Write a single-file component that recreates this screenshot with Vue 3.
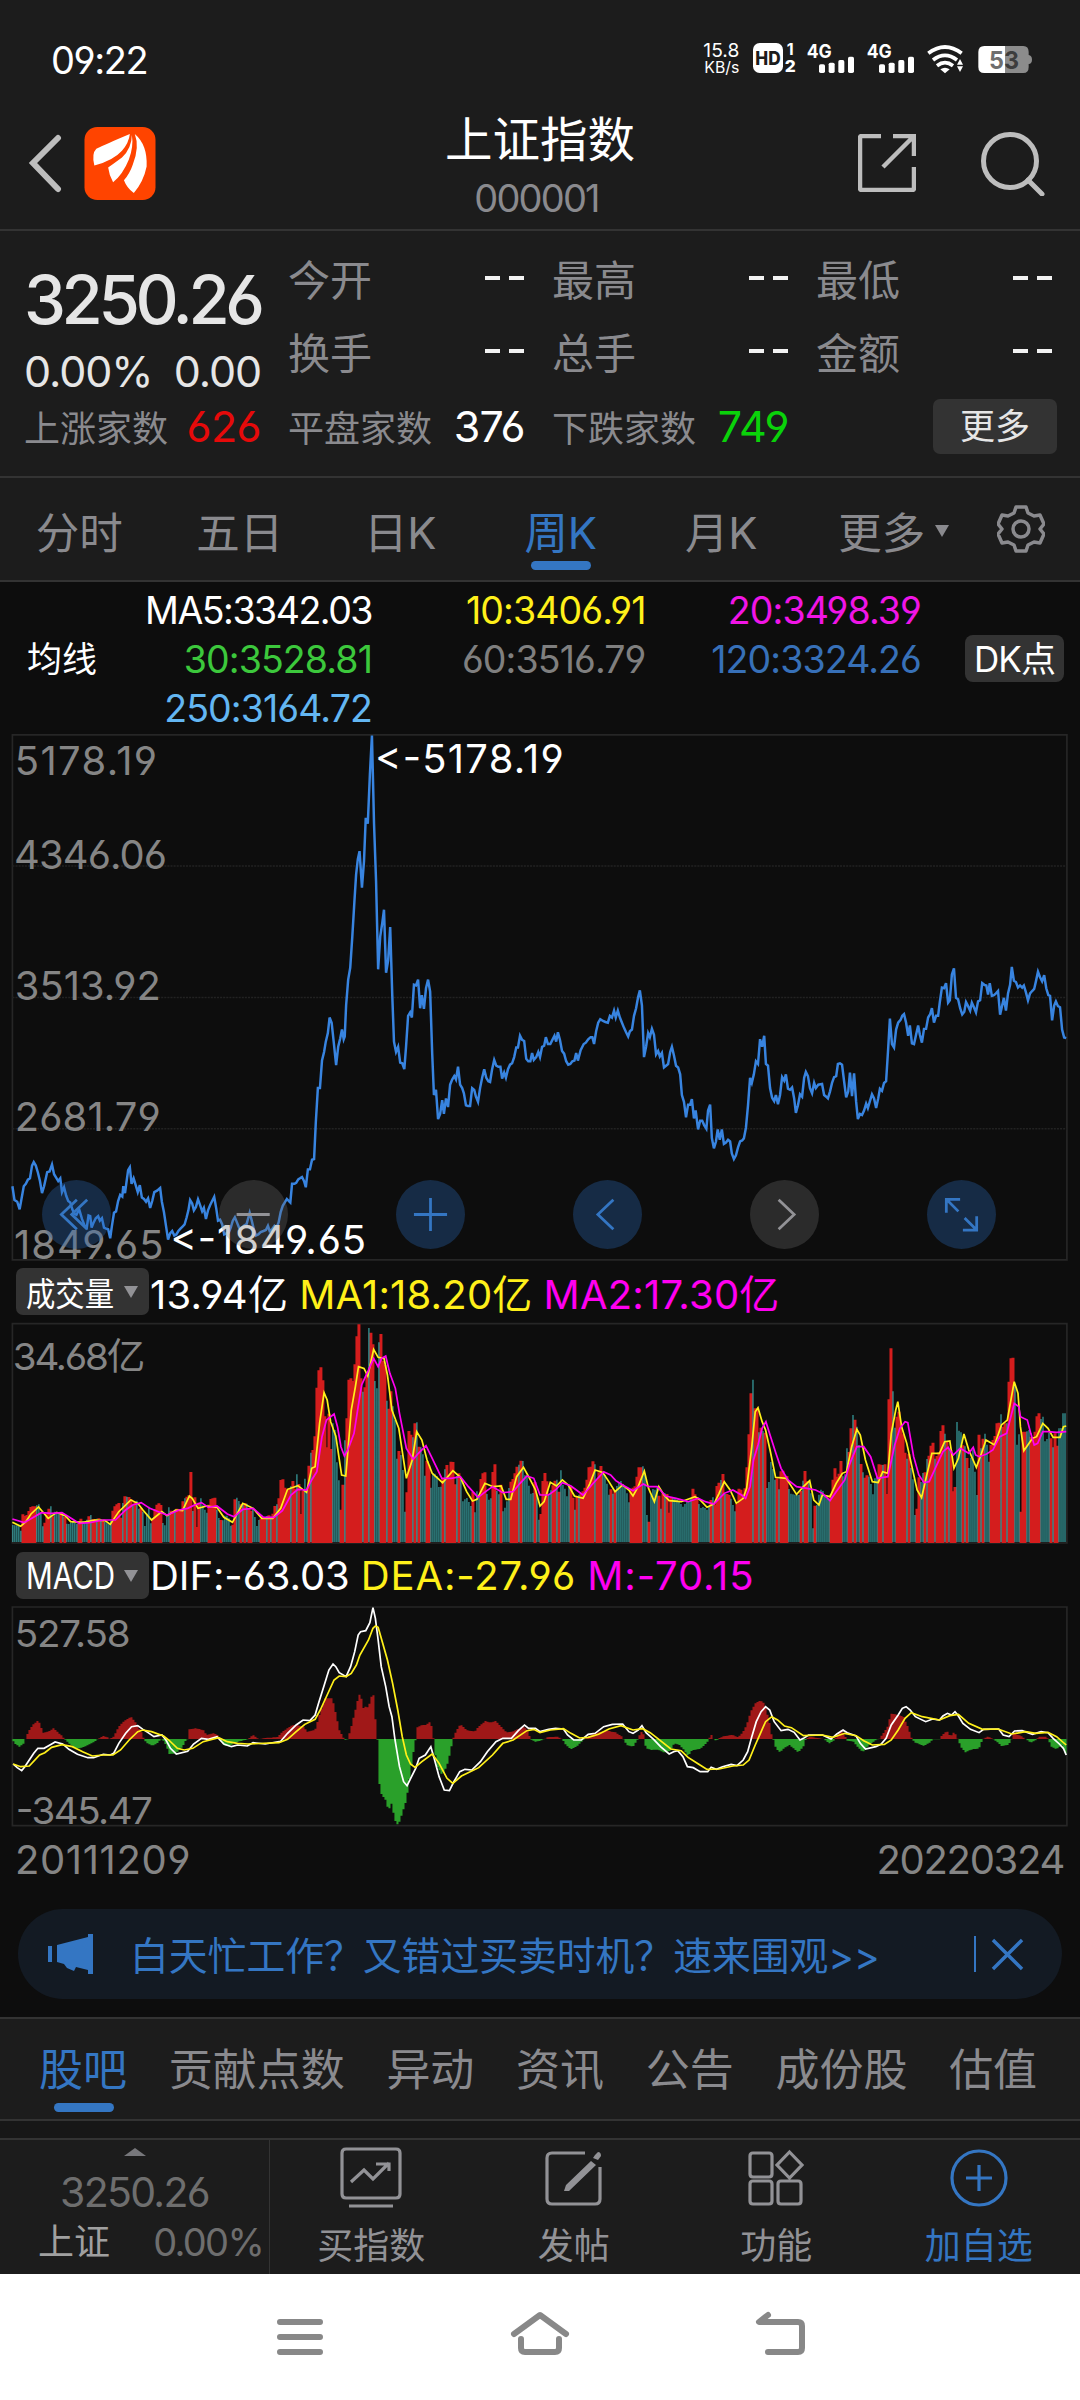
<template>
  <div class="page">
    <div class="status">
      <span class="clock">09:22</span>
      <svg class="status-icons" viewBox="0 0 1110 150">
        <g class="fill-white">
          <text x="40" y="81" font-size="57" textLength="108" lengthAdjust="spacingAndGlyphs">15.8</text>
          <text x="43" y="128" font-size="48" textLength="105" lengthAdjust="spacingAndGlyphs">KB/s</text>
          <rect x="189" y="39" width="90" height="90" rx="20" />
          <text class="dark" x="196" y="104" font-size="56" font-weight="800" textLength="76" lengthAdjust="spacingAndGlyphs">HD</text>
          <text x="290" y="74" font-size="48" font-weight="700" textLength="20">1</text>
          <text x="284" y="127" font-size="48" font-weight="800" textLength="33" lengthAdjust="spacingAndGlyphs">2</text>
          <g v-for="dx in [0, 180]" :key="dx" :transform="`translate(${dx} 0)`">
            <text x="350" y="83" font-size="58" font-weight="700" textLength="75" lengthAdjust="spacingAndGlyphs">4G</text>
            <rect x="387" y="103" width="18" height="26" rx="5" />
            <rect x="416" y="98" width="18" height="31" rx="5" />
            <rect x="445" y="90" width="18" height="39" rx="5" />
            <rect x="474" y="80" width="18" height="49" rx="5" />
          </g>
          <path d="M751 118q14-10 28 0l-14 12z" />
          <path class="wifi" d="M715 70q50-38 100 0M729 90q36-28 72 0M741 107q24-18 48 0" />
          <path class="cut" d="M810 80L794 106 810 134 826 106z" />
          <path d="M810 87l9 17h-18zM810 126l9-17h-18z" />
        </g>
        <path fill="#8c8c8c" d="M945 48h55q16 0 16 18v9q10 2 10 14t-10 13v9q0 18-16 18h-55z" />
        <path fill="#fff" d="M945 48h-62q-18 0-18 18v45q0 18 18 18h62z" />
        <text x="897" y="116" font-size="74" font-weight="700" textLength="90" lengthAdjust="spacingAndGlyphs"><tspan fill="#6e6e6e">5</tspan><tspan fill="#3d3d3d">3</tspan></text>
      </svg>
    </div>

    <header class="header">
      <div class="head-side">
        <svg class="back" viewBox="0 0 40 60"><path d="M33 5L8 30l25 26" /></svg>
        <svg class="logo" viewBox="0 0 72 74">
          <rect width="72" height="74" rx="13" fill="#ff4400" />
          <path fill="#fff" d="M46 7Q22 17 12 22 7 27 10 39 29 34 38 24 45 16 46 7zM48 8Q48 21 38 31 30 37 24 41 25 49 29 56 39 48 45 33 50 19 48 8zM51 7Q56 20 49 38 46 47 40 54 43 62 50 67 60 55 63 40 64 18 51 7z" />
        </svg>
      </div>
      <div class="head-title">
        <h1>上证指数</h1>
        <span>000001</span>
      </div>
      <div class="head-side right">
        <svg class="share" viewBox="0 0 58 58"><path d="M23 2H4Q2 2 2 4v50q0 2 2 2h50q2 0 2-2V33M35 2h21v20M56 2L25 33" /></svg>
        <svg class="search" viewBox="0 0 64 64"><circle cx="29" cy="29" r="26.5" /><path d="M47 48l14 14" /></svg>
      </div>
    </header>

    <section class="quote">
      <div class="quote-main">
        <div class="price">3250.26</div>
        <div class="change"><span>0.00%</span><span>0.00</span></div>
      </div>
      <div v-for="(col, i) in quoteCols" :key="i" class="quote-col">
        <div v-for="name in col" :key="name"><span>{{ name }}</span><b><i></i><i></i></b></div>
      </div>
      <div v-for="c in counts" :key="c.name" class="count" :class="c.cls">
        <span>{{ c.name }}</span><b>{{ c.value }}</b>
      </div>
      <div class="more"><button>更多</button></div>
    </section>

    <nav class="period">
      <span v-for="p in periods" :key="p" :class="{ active: p === '周K' }">
        {{ p }}<em v-if="p === '更多'"></em>
      </span>
      <svg class="gear" viewBox="0 0 48 48">
        <path d="M19 2h10l2 6 6 3 6-1 4 9-4 5 4 5-4 9-6-1-6 3-2 6H19l-2-6-6-3-6 1-4-9 4-5-4-5 4-9 6 1 6-3z" />
        <circle cx="24" cy="24" r="8" />
      </svg>
    </nav>

    <section class="averages">
      <span class="avg-name">均线</span>
      <div class="avg-list">
        <span v-for="m in averages" :key="m.text" :style="{ color: m.color }">{{ m.text }}</span>
      </div>
      <button>DK点</button>
    </section>

    <section class="stage">
      <svg class="plot price-plot" viewBox="0 0 3136 1545" preserveAspectRatio="none">
        <path class="frame" d="M36 14H3098V1539H36z" />
        <path class="grid-line" d="M36 395H3098M36 777H3098M36 1158H3098" />
        <g class="axis" font-size="116">
          <text x="43" y="130" textLength="413">5178.19</text>
          <text x="41" y="403" textLength="444">4346.06</text>
          <text x="43" y="783" textLength="424">3513.92</text>
          <text x="43" y="1166" textLength="424">2681.79</text>
          <text x="41" y="1535" textLength="434">1849.65</text>
        </g>
        <polyline class="line blue" :points="priceLine" />
        <g class="mark" font-size="116">
          <text x="1089" y="124" textLength="548">&lt;-5178.19</text>
          <text x="495" y="1521" textLength="568">&lt;-1849.65</text>
        </g>
      </svg>
      <div class="tools">
        <button v-for="t in tools" :key="t.d" :class="{ off: t.off }">
          <svg viewBox="0 0 200 200"><path :d="t.d" /></svg>
        </button>
      </div>
    </section>

    <div class="indicator vol-head">
      <button><span class="vol-name">成交量</span><em></em></button>
      <b>13.94亿</b><b class="yellow">MA1:18.20亿</b><b class="pink">MA2:17.30亿</b>
    </div>
    <svg class="plot sub-plot" viewBox="0 186 3136 672" preserveAspectRatio="none">
      <path class="frame" d="M36 191H3098V849H36z" />
      <path :d="volume.red" fill="#d41d1d" />
      <path :d="volume.cyan" fill="#4adfe0" fill-opacity=".85" />
      <text class="axis" x="37" y="330" font-size="112" textLength="385">34.68亿</text>
      <polyline class="line thin yellow" :points="volMa1" />
      <polyline class="line thin pink" :points="volMa2" />
    </svg>

    <div class="indicator macd-head">
      <button><span class="macd-name">MACD</span><em></em></button>
      <b class="dif">DIF:-63.03</b><b class="yellow">DEA:-27.96</b><b class="pink">M:-70.15</b>
    </div>
    <svg class="plot sub-plot" viewBox="0 195 3136 672" preserveAspectRatio="none">
      <path class="frame" d="M36 201H3098V857H36z" />
      <path :d="histogram.up" fill="#a01818" />
      <path :d="histogram.down" fill="#2aa02a" />
      <g class="axis" font-size="112">
        <text x="43" y="322" textLength="336">527.58</text>
        <text x="46" y="851" textLength="398">-345.47</text>
      </g>
      <polyline class="line thin white" :points="dif" />
      <polyline class="line thin yellow" :points="dea" />
    </svg>
    <div class="dates"><span>20111209</span><span>20220324</span></div>

    <div class="banner-wrap">
      <div class="banner">
        <svg class="horn" viewBox="0 0 45 40"><path d="M0 12h4v16H0zM9 11L40 3V0h5v40h-5v-4l-12-3-2 4-7-3-3-4-7-2z" /></svg>
        <span>白天忙工作？又错过买卖时机？速来围观&gt;&gt;</span>
        <i></i>
        <svg class="close" viewBox="0 0 34 34"><path d="M2 2l30 30M32 2L2 32" /></svg>
      </div>
    </div>

    <nav class="sections">
      <span v-for="s in sections" :key="s" :class="{ active: s === '股吧' }">{{ s }}</span>
    </nav>
    <div class="strip"></div>

    <footer class="bottom">
      <div class="index">
        <em></em>
        <strong>3250.26</strong>
        <div><span>上证</span><b>0.00%</b></div>
      </div>
      <div v-for="a in actions" :key="a.name" class="action" :class="{ active: a.active }">
        <svg viewBox="0 0 62 62"><path :d="a.d" /><path v-if="a.solid" class="solid" :d="a.solid" /></svg>
        <span>{{ a.name }}</span>
      </div>
    </footer>

    <div class="system">
      <svg viewBox="0 0 60 50"><path d="M10 12h40M10 27h40M10 42h40" /></svg>
      <svg viewBox="0 0 60 50"><path d="M4 24L30 5l26 19M11 29v9q0 4 4 4h30q4 0 4-4v-9" /></svg>
      <svg viewBox="0 0 60 50"><path d="M18 5l-9 7h39q4 0 4 4v22q0 4-4 4H18" /></svg>
    </div>
  </div>
</template>

<script setup>
const quoteCols = [["今开", "换手"], ["最高", "总手"], ["最低", "金额"]];
const counts = [
  { name: "上涨家数", value: 626, cls: "rise" },
  { name: "平盘家数", value: 376, cls: "" },
  { name: "下跌家数", value: 749, cls: "fall" },
];
const periods = ["分时", "五日", "日K", "周K", "月K", "更多"];
const averages = [
  { text: "MA5:3342.03", color: "#ffffff" },
  { text: "10:3406.91", color: "#fff01a" },
  { text: "20:3498.39", color: "#f015e6" },
  { text: "30:3528.81", color: "#3cc83c" },
  { text: "60:3516.79", color: "#7f7f7f" },
  { text: "120:3324.26", color: "#3770b8" },
  { text: "250:3164.72", color: "#63b6f2" },
];
const sections = ["股吧", "贡献点数", "异动", "资讯", "公告", "成份股", "估值"];
const tools = [
  { d: "M101 57L56 100l45 43M131 57L86 100l45 43" },
  { d: "M51 100h96", off: true },
  { d: "M52 100h96M100 52v96" },
  { d: "M117 57L72 100l45 43" },
  { d: "M83 57l45 43-45 43", off: true },
  { d: "M96 56H56v39M56 56l35 35M104 145h40v-40M144 145l-35-35" },
];
const actions = [
  {
    name: "买指数",
    d: "M6 2h50q4 0 4 4v41q0 4-4 4H6q-4 0-4-4V6q0-4 4-4zM9 59h44M11 35l13-12 9 9 16-16M36 17h13v7",
  },
  {
    name: "发帖",
    d: "M42 6H9Q4 6 4 11v41q0 5 5 5h43q5 0 5-5V20",
    solid: "M48 14l5 4-27 26-5 0 2-6zM52 8l3-3q3 0 3 4l-3 4-5-2z",
  },
  {
    name: "功能",
    d: "M8 6h16q3 0 3 3v18q0 3-3 3H8q-3 0-3-3V9q0-3 3-3zM8 34h16q3 0 3 3v17q0 3-3 3H8q-3 0-3-3V37q0-3 3-3zM36 34h17q3 0 3 3v17q0 3-3 3H36q-3 0-3-3V37q0-3 3-3zM44.500 5L57 18 44.500 31 32 18z",
  },
  {
    name: "加自选",
    d: "M31 4a27 27 0 1 1 0 54a27 27 0 1 1 0-54zM31 18v26M18 31h26",
    active: true,
  },
];

// 图表数据分左右两屏存放，每屏宽 1568
const HALF = 1568;
const parse = (s) => s.trim().split(/\s+/).map((p) => p.split(",").map(Number));
const join = (left, right) => [...parse(left), ...parse(right).map(([x, y]) => [x + HALF, y])];
const toPoints = (list) => list.map((p) => p.join(",")).join(" ");

const priceLine = toPoints(join(
  `36,1325 42,1365 50,1370 57,1392 69,1325 75,1318 81,1306 87,1302 93,1265 98,1255 104,1265 110,1285 116,1310 122,1345 128,1325 137,1284 144,1282 151,1262 157,1290 163,1300 169,1310 175,1302 180,1342 186,1328 192,1352 198,1368 204,1372 210,1392 216,1405 222,1408 230,1392 238,1420 246,1440 252,1445 257,1410 262,1412 266,1445 272,1430 278,1418 285,1412 290,1425 296,1418 302,1445 308,1448 314,1450 320,1476 325,1440 331,1402 337,1398 343,1368 349,1350 355,1355 358,1325 363,1345 367,1315 372,1278 377,1270 382,1318 388,1302 394,1322 400,1342 406,1322 412,1358 418,1362 424,1370 430,1360 436,1388 442,1368 448,1342 456,1338 465,1330 470,1370 476,1400 482,1440 488,1480 494,1462 500,1455 506,1468 512,1465 518,1455 524,1448 530,1442 536,1436 542,1415 547,1395 552,1365 558,1375 563,1395 569,1385 575,1363 581,1380 587,1398 592,1388 598,1420 604,1395 610,1380 616,1368 622,1356 628,1390 633,1425 639,1422 645,1435 651,1465 657,1462 664,1460 670,1445 676,1425 682,1415 688,1430 694,1445 700,1448 708,1440 716,1435 725,1402 731,1425 737,1450 743,1468 750,1465 757,1458 765,1455 772,1452 778,1440 783,1455 790,1450 797,1440 803,1445 809,1430 815,1400 821,1382 827,1372 833,1362 839,1368 843,1372 848,1318 855,1318 860,1315 866,1305 871,1302 877,1298 883,1310 888,1328 894,1276 900,1276 906,1248 912,1246 917,1140 923,1040 929,1040 935,960 941,935 946,905 952,880 957,835 963,850 970,915 976,973 982,920 988,895 993,870 998,898 1001,890 1005,800 1011,725 1017,690 1023,600 1029,500 1034,420 1039,375 1044,352 1051,458 1057,380 1062,255 1068,272 1074,130 1080,16 1086,270 1092,440 1098,695 1104,600 1110,560 1115,522 1121,705 1127,670 1133,572 1139,770 1144,905 1150,935 1156,920 1162,966 1168,968 1174,985 1179,920 1185,830 1191,820 1196,835 1202,740 1208,742 1214,725 1220,808 1225,770 1231,810 1237,750 1243,725 1249,760 1255,940 1260,1060 1266,1045 1272,1130 1278,1115 1284,1075 1289,1115 1295,1070 1301,1095 1307,1030 1313,1015 1319,1005 1324,1015 1330,978 1336,1030 1342,1040 1347,1055 1353,1090 1359,1092 1365,1092 1371,1040 1377,1045 1382,1065 1388,1080 1394,1040 1400,1010 1406,985 1412,1010 1418,1020 1423,1022 1429,985 1435,958 1441,975 1447,978 1453,978 1458,1012 1464,995 1469,1010 1475,985 1481,972 1487,968 1493,950 1499,922 1504,922 1510,888 1516,900 1522,903 1528,955 1534,962 1540,962 1545,938 1550,958 1557,950 1563,935`,
  `0,950 6,920 12,917 17,892 23,912 30,912 36,900 42,888 47,905 52,878 58,900 64,932 70,940 76,962 82,972 88,970 94,962 100,960 105,938 110,960 118,930 127,912 133,908 140,898 147,892 152,892 157,912 163,875 169,850 175,840 183,845 190,848 197,850 203,830 209,835 215,815 220,835 226,815 232,835 238,850 244,865 250,878 256,890 261,875 267,870 273,830 279,808 285,775 290,756 296,800 302,950 308,920 314,880 319,892 325,868 331,885 337,942 343,932 348,948 354,938 360,980 366,975 372,970 378,935 383,920 389,945 395,975 401,980 407,1000 412,1060 418,1080 424,1125 430,1088 436,1088 441,1072 447,1128 452,1105 459,1160 465,1135 471,1135 477,1148 483,1158 488,1105 494,1088 499,1185 505,1215 511,1195 516,1160 522,1190 528,1160 534,1202 540,1198 546,1190 552,1195 557,1230 563,1246 569,1235 575,1212 581,1195 587,1192 592,1186 598,1155 604,1090 610,1010 615,1025 621,1000 627,962 633,970 639,898 645,920 651,888 656,970 662,975 668,1040 674,1068 680,1078 685,1060 691,1087 697,1060 703,1008 709,1018 714,1000 720,1042 726,1045 732,1038 738,1070 743,1112 749,1090 755,1058 761,1065 767,1010 772,993 778,1005 784,1040 790,1055 796,1025 801,1040 808,1030 819,1028 825,1060 831,1065 836,1070 842,1050 848,1025 854,1008 860,1005 865,970 871,968 877,972 883,1020 889,1067 895,1050 900,995 906,1063 912,997 918,1080 923,1130 929,1115 935,1118 941,1105 947,1085 952,1098 958,1078 964,1058 970,1070 976,1098 982,1070 987,1042 993,1048 999,1025 1005,1020 1011,925 1016,838 1022,912 1028,922 1034,870 1040,850 1047,842 1052,830 1057,825 1063,850 1069,888 1074,858 1080,910 1086,912 1092,885 1098,858 1103,885 1109,908 1115,868 1121,868 1127,835 1133,825 1138,808 1144,850 1150,830 1156,830 1161,790 1167,748 1173,750 1179,735 1185,792 1190,785 1196,710 1202,692 1208,778 1214,782 1220,808 1226,826 1232,818 1237,790 1243,802 1249,815 1254,792 1260,805 1266,820 1272,788 1278,785 1284,735 1290,740 1296,742 1301,768 1306,735 1312,772 1318,770 1324,765 1330,758 1336,827 1342,800 1347,778 1353,815 1359,765 1365,740 1370,688 1376,728 1382,732 1388,748 1394,742 1400,748 1405,742 1411,762 1417,785 1423,765 1429,758 1435,752 1440,730 1446,702 1452,718 1458,730 1464,712 1470,750 1476,770 1481,772 1487,843 1493,800 1498,788 1504,802 1510,805 1516,870 1522,893 1528,895`
));

const volTops = join(
  `36,795 55,797 60,815 64,762 75,770 90,740 105,738 112,730 120,770 126,812 132,775 140,750 147,733 150,780 157,755 175,757 187,768 195,795 210,785 222,792 235,775 245,790 262,762 270,778 290,775 310,790 320,795 325,758 335,735 347,728 352,790 358,708 370,710 378,712 385,735 396,717 405,755 412,735 420,800 425,765 432,740 440,810 446,755 458,727 467,735 475,812 490,742 500,760 510,745 525,750 530,725 540,710 548,710 550,636 557,636 560,765 566,708 570,825 575,735 582,712 590,740 600,760 610,718 625,713 632,770 645,785 655,762 668,780 674,828 680,720 687,712 700,735 715,727 725,755 735,745 745,800 752,778 770,770 783,765 790,775 795,740 808,730 815,660 823,658 828,690 842,685 850,663 857,690 861,640 867,662 873,767 877,715 884,645 890,715 893,615 898,618 902,580 906,562 911,580 916,495 921,348 928,322 934,322 940,395 948,590 953,425 960,575 965,490 971,490 977,600 983,648 989,755 995,683 1000,540 1005,545 1010,365 1016,352 1026,365 1034,265 1038,192 1044,192 1048,373 1052,400 1056,385 1064,378 1069,192 1074,225 1080,208 1087,338 1092,438 1099,258 1104,192 1110,300 1120,320 1126,518 1132,370 1140,440 1145,435 1150,605 1158,573 1163,580 1169,617 1175,755 1180,752 1185,520 1191,498 1196,570 1200,512 1209,468 1215,560 1221,560 1227,575 1233,652 1238,600 1245,615 1250,690 1256,640 1262,640 1270,650 1276,695 1285,660 1290,637 1296,603 1302,655 1308,605 1316,606 1320,675 1330,633 1338,660 1343,725 1355,713 1367,738 1372,685 1378,765 1384,693 1390,712 1395,660 1402,640 1408,637 1415,720 1425,717 1430,640 1437,612 1443,700 1448,705 1455,670 1460,755 1470,735 1478,680 1485,660 1492,655 1498,622 1506,615 1517,592 1522,645 1530,650 1537,685 1545,715 1552,660 1560,715`,
  `0,828 5,685 12,636 18,645 24,710 30,695 40,668 48,652 54,705 59,618 65,672 71,680 77,715 83,672 92,683 100,757 106,710 118,700 128,690 135,665 141,622 148,620 154,602 160,615 166,668 175,610 181,640 187,640 193,665 200,705 208,680 212,705 222,680 233,660 245,680 252,700 258,728 264,685 275,680 280,655 287,622 296,622 303,615 310,765 317,788 323,685 335,690 342,678 350,755 355,700 368,700 375,767 380,710 400,720 415,740 428,720 437,730 441,675 447,700 455,710 465,745 475,740 484,750 492,735 500,705 508,735 512,680 518,670 525,660 530,633 537,705 545,700 552,710 560,735 569,765 575,685 585,690 592,710 598,655 604,578 611,413 617,343 623,445 630,445 636,525 642,500 648,515 655,520 660,747 668,600 675,620 681,660 688,655 692,705 698,635 705,632 712,650 718,648 724,700 735,703 745,705 755,705 762,670 768,627 774,665 780,660 786,690 791,822 797,737 805,735 812,688 820,690 830,715 842,720 848,678 855,620 862,650 867,650 872,587 878,650 885,645 890,557 895,600 900,530 907,462 914,478 920,500 926,557 930,605 938,640 944,655 952,640 960,668 966,707 972,655 978,650 984,612 995,615 1003,612 1007,705 1012,545 1014,265 1020,265 1024,383 1030,505 1036,470 1042,455 1048,495 1055,530 1060,585 1066,598 1073,575 1078,640 1083,660 1088,760 1092,805 1098,645 1105,670 1112,637 1118,637 1123,597 1130,585 1136,550 1143,547 1147,603 1155,580 1160,575 1166,480 1174,515 1180,540 1188,570 1194,570 1199,700 1204,707 1209,478 1215,513 1221,510 1228,557 1235,560 1244,630 1250,600 1256,560 1262,625 1268,720 1274,522 1280,565 1286,535 1292,520 1300,570 1304,612 1310,545 1320,535 1325,490 1332,490 1338,462 1344,500 1350,490 1356,490 1360,423 1363,297 1373,293 1378,343 1384,560 1390,505 1396,765 1402,515 1412,515 1420,510 1428,540 1437,515 1444,458 1450,460 1454,478 1460,468 1466,545 1472,537 1480,510 1488,570 1495,520 1502,565 1507,500 1513,505 1518,460 1524,460 1529,582`
);

// 收跌的区间 [起, 止]
const fallRanges = join(
  `36,60 108,124 145,147 157,170 180,182 192,222 238,250 262,265 278,280 290,292 302,322 354,356 366,368 382,384 395,405 412,430 436,438 470,492 506,508 535,537 558,560 580,600 627,635 645,672 685,695 703,706 714,716 732,752 772,774 785,787 802,804 842,844 859,861 884,890 900,902 964,984 1000,1002 1051,1053 1068,1070 1086,1094 1098,1100 1120,1122 1138,1152 1160,1175 1196,1198 1208,1210 1220,1232 1250,1280 1289,1291 1324,1326 1337,1366 1376,1390 1410,1425 1440,1450 1458,1475 1504,1506 1517,1545 1560,1566`,
  `24,25 30,31 47,48 59,76 82,83 100,101 110,111 158,159 181,198 210,211 222,256 297,308 320,338 348,349 361,362 385,440 460,490 500,501 523,524 535,536 552,566 617,618 634,635 645,646 657,680 692,693 720,750 762,763 780,790 802,840 878,879 884,885 890,891 907,908 919,925 936,937 953,978 995,996 1023,1024 1029,1030 1063,1064 1075,1090 1104,1110 1122,1123 1145,1146 1174,1175 1186,1187 1209,1220 1232,1233 1244,1268 1279,1280 1290,1304 1337,1338 1354,1355 1377,1390 1412,1422 1453,1470 1476,1477 1488,1489 1504,1530`
);
// 右屏区间的终点也要平移
const falls = fallRanges.map(([a, b]) => (a >= HALF ? [a, b + HALF] : [a, b]));

const STEP = 5.808;
const COUNT = 527;

const sample = (list, x) => {
  let i = 1;
  while (i < list.length - 1 && list[i][0] < x) i++;
  const [x0, y0] = list[i - 1];
  const [x1, y1] = list[i];
  const t = Math.min(1, Math.max(0, (x - x0) / (x1 - x0)));
  return Math.round(y0 + (y1 - y0) * t);
};

const bar = (x, w, y0, y1) => `M${x.toFixed(1)} ${y0}h${w}V${y1}h${-w}z`;

const buildVolume = () => {
  const out = { red: "", cyan: "" };
  for (let i = 0; i < COUNT; i++) {
    const x = 36 + i * STEP;
    const top = Math.max(193, sample(volTops, x + 1));
    const isFall = falls.some(([a, b]) => x > a - 3 && x < b + 1.8);
    if (isFall) {
      out.cyan += bar(x, 2.904, top, 846);
    } else {
      out.red += bar(x - 2.9, 8.7, top, 849);
    }
  }
  return out;
};

const ZERO = 597;
const macdTops = join(
  `36,600 45,612 57,620 69,610 71,597 75,597 82,575 95,555 108,543 115,548 125,578 140,575 155,565 170,578 182,590 188,597 200,610 215,622 232,625 250,618 270,608 283,598 300,588 312,592 320,597 330,590 345,560 358,545 380,530 392,545 410,575 418,597 425,608 442,617 455,612 465,600 472,597 482,615 492,642 510,640 530,620 540,600 546,597 550,568 570,565 590,570 600,585 618,580 630,583 640,597 650,615 665,620 680,608 712,600 720,597 735,585 750,597 780,593 805,592 820,575 850,555 880,558 892,575 915,570 922,545 932,510 945,475 965,475 975,520 985,570 1000,598 1008,600 1012,590 1020,560 1032,510 1042,465 1048,462 1053,505 1062,500 1070,503 1078,470 1086,465 1090,530 1092,597 1097,600 1100,720 1106,760 1120,780 1128,812 1137,790 1147,840 1156,857 1168,820 1180,780 1190,710 1200,640 1207,597 1212,562 1225,555 1238,555 1246,545 1254,560 1259,597 1262,630 1270,680 1283,703 1297,680 1307,640 1315,597 1325,572 1337,553 1355,570 1378,575 1390,560 1410,543 1425,548 1440,543 1455,560 1470,577 1490,575 1505,567 1523,560 1535,580 1540,597 1555,605 1566,603`,
  `0,603 10,598 15,597 20,592 50,590 65,597 75,615 90,628 108,618 125,600 130,597 140,588 165,578 195,572 220,577 238,590 242,597 252,615 270,620 282,600 286,597 292,575 300,578 302,597 308,625 325,630 340,628 360,638 378,632 390,610 405,615 418,630 430,648 442,630 465,627 485,608 490,597 497,583 503,597 512,602 520,595 535,588 560,585 575,592 590,575 600,555 612,515 625,490 640,482 652,490 662,530 670,565 674,597 679,600 685,625 697,637 708,625 725,615 740,628 750,637 765,620 772,597 785,590 805,594 825,597 840,610 855,600 860,590 875,570 888,592 892,602 910,605 922,620 938,636 955,615 975,600 985,597 1000,575 1012,555 1018,520 1040,525 1055,530 1070,565 1080,597 1090,608 1115,618 1135,605 1140,598 1160,598 1168,585 1182,573 1192,590 1203,575 1213,597 1222,620 1235,637 1255,628 1275,625 1285,598 1300,590 1315,597 1325,603 1340,618 1360,615 1370,597 1375,580 1395,587 1410,597 1425,608 1440,600 1450,590 1470,590 1475,597 1485,620 1500,627 1515,615 1528,645`
);

const buildHistogram = () => {
  const out = { up: "", down: "" };
  for (let i = 0; i < COUNT; i++) {
    const x = 36 + i * STEP;
    const y = sample(macdTops, x + 3);
    if (y < ZERO) out.up += bar(x, 6, y, ZERO);
    else if (y > ZERO) out.down += bar(x, 6, ZERO, y);
  }
  return out;
};

const volume = buildVolume();
const histogram = buildHistogram();

const volMa1 = toPoints(join(
  `36,787 60,799 75,785 90,762 112,741 125,757 140,775 165,757 190,768 205,785 240,787 275,780 305,782 320,793 345,755 365,735 380,720 400,730 415,750 440,780 470,755 485,767 510,750 530,752 550,708 558,715 575,745 600,738 630,742 650,772 675,787 705,730 735,745 760,775 792,775 815,745 835,688 865,677 890,697 905,625 915,620 928,490 941,398 950,420 960,485 975,528 992,645 1004,648 1020,450 1032,380 1041,320 1057,325 1068,348 1085,268 1098,292 1115,295 1125,345 1138,450 1158,505 1180,655 1197,600 1210,515 1225,540 1240,600 1255,640 1285,668 1315,632 1337,652 1355,695 1372,723 1385,718 1408,670 1420,675 1432,680 1455,678 1470,718 1483,718 1500,650 1520,622 1535,650 1555,690`,
  `0,738 12,725 30,667 48,678 65,660 82,675 100,708 125,715 145,670 160,630 182,637 200,665 218,695 240,675 258,690 270,708 285,680 303,633 315,685 332,725 345,680 360,705 375,722 410,725 450,710 465,720 485,742 505,732 520,700 535,665 552,690 570,730 590,715 600,685 615,560 625,455 633,443 645,485 655,510 668,570 684,652 715,655 745,703 765,680 783,662 795,720 810,735 820,705 842,710 860,670 878,640 890,635 905,560 920,508 930,525 945,600 965,665 982,668 995,635 1010,640 1020,520 1033,450 1039,425 1050,500 1065,550 1080,620 1095,690 1108,713 1122,650 1138,580 1160,580 1175,545 1190,543 1202,625 1215,595 1231,522 1245,570 1267,622 1282,580 1295,540 1320,555 1340,495 1357,480 1377,365 1388,400 1395,500 1405,572 1420,550 1430,535 1442,530 1460,490 1475,505 1490,532 1510,532 1520,500 1528,498`
));
const volMa2 = toPoints(join(
  `36,777 70,788 100,770 120,758 150,760 180,758 210,777 230,790 260,788 300,780 335,780 365,750 385,735 410,728 435,745 460,755 485,765 520,750 545,745 565,735 585,728 605,742 630,738 660,762 680,770 705,748 735,745 765,772 795,772 820,752 845,705 865,688 890,690 905,660 920,635 935,530 948,480 970,462 980,500 990,560 1000,588 1010,570 1028,520 1040,440 1050,375 1068,335 1085,295 1098,320 1108,295 1120,288 1132,340 1148,385 1160,460 1180,565 1200,598 1215,580 1237,557 1255,595 1283,655 1310,655 1337,650 1360,680 1388,712 1410,695 1430,680 1460,698 1490,695 1510,670 1530,648 1550,655`,
  `0,705 25,705 45,690 65,668 90,678 125,705 150,675 185,635 205,645 220,662 245,678 270,692 300,672 315,680 340,680 365,708 395,715 430,725 460,715 480,725 505,732 535,700 560,690 585,705 597,715 610,680 620,600 633,555 645,505 656,485 668,525 685,580 700,625 720,660 745,680 775,685 800,690 820,700 842,722 860,695 885,660 900,610 920,560 940,560 960,590 980,655 1010,650 1030,555 1045,505 1060,485 1068,488 1075,530 1085,590 1100,645 1115,668 1130,665 1150,620 1170,575 1185,562 1200,585 1220,565 1245,580 1258,562 1265,585 1275,590 1295,583 1315,570 1335,530 1355,520 1377,430 1390,440 1395,470 1415,480 1425,520 1435,555 1445,550 1460,515 1475,515 1500,517 1528,515`
));
const dif = toPoints(join(
  `38,672 50,683 63,692 72,680 85,660 98,640 110,625 128,625 150,612 160,606 182,612 200,628 225,643 255,653 272,653 300,643 320,645 330,640 345,610 365,580 382,560 400,557 415,568 430,578 447,590 470,585 482,600 495,625 512,642 545,634 562,612 585,595 605,598 630,590 650,612 672,620 690,615 718,618 735,608 770,612 815,604 835,580 860,555 880,540 900,542 915,525 925,490 940,440 955,390 967,372 975,380 985,398 1005,410 1018,380 1030,335 1040,285 1047,275 1062,272 1074,248 1083,203 1090,235 1098,300 1107,380 1120,440 1130,500 1138,530 1147,600 1160,680 1172,725 1182,737 1195,710 1207,685 1217,655 1235,645 1251,620 1262,660 1275,710 1290,750 1305,752 1318,725 1335,695 1350,688 1370,690 1395,665 1415,635 1440,605 1460,595 1485,595 1505,572 1523,555 1535,565 1555,565`,
  `0,575 25,568 45,565 68,567 80,585 98,600 120,600 140,583 160,580 185,560 210,553 240,552 258,575 270,580 285,570 296,557 308,578 330,598 350,620 375,642 388,635 400,632 415,650 428,680 445,683 465,695 487,695 497,682 512,688 530,680 555,673 572,677 590,660 603,635 615,590 628,545 642,515 655,500 667,510 680,545 700,572 720,568 738,577 755,600 765,595 780,585 820,585 845,597 862,582 880,570 892,578 918,588 930,610 945,627 975,620 990,613 1005,595 1020,555 1040,525 1052,505 1063,500 1075,510 1090,530 1120,545 1140,537 1160,540 1170,528 1183,520 1195,525 1205,515 1213,525 1228,550 1250,568 1275,578 1288,568 1332,567 1345,585 1362,590 1378,573 1400,572 1430,583 1455,575 1475,578 1490,595 1508,612 1520,625 1528,645`
));
const dea = toPoints(join(
  `38,672 60,680 85,678 115,645 130,638 150,622 180,614 210,620 240,635 268,648 300,645 328,645 350,630 375,600 400,575 415,570 440,575 475,588 490,600 515,625 535,630 560,625 590,605 635,593 660,605 690,610 720,612 810,608 835,598 860,575 885,553 915,538 930,510 950,465 970,420 985,408 1005,410 1020,400 1035,375 1045,345 1070,300 1083,265 1090,258 1098,262 1110,305 1125,360 1140,430 1155,510 1168,590 1180,645 1192,672 1205,682 1225,665 1255,642 1275,670 1298,715 1315,730 1340,708 1390,683 1430,645 1460,610 1490,600 1530,572 1550,568`,
  `0,578 30,570 68,566 90,580 115,594 140,592 170,583 200,567 235,557 270,570 298,566 320,578 345,598 380,627 410,632 430,652 460,672 485,688 520,687 560,678 590,675 607,660 625,615 640,580 655,545 673,530 690,540 710,558 730,563 765,587 820,585 850,592 885,580 918,587 940,602 965,615 1000,613 1020,600 1040,570 1060,535 1078,518 1110,530 1160,540 1190,527 1215,523 1245,550 1285,568 1330,567 1370,582 1410,575 1440,580 1475,577 1500,590 1528,615`
));
</script>

<style>
body {
  background: #1c1c1c;
}
</style>

<style scoped>
.page {
  width: 1080px;
  height: 2400px;
  overflow: hidden;
  display: flex;
  flex-direction: column;
  background: #1c1c1c;
  color: #fff;
  font-family: Inter, "Noto Sans CJK SC", sans-serif;
  font-feature-settings: "cv03", "cv04";
  box-sizing: border-box;
  white-space: nowrap;
}
.page > * {
  flex: none;
  box-sizing: border-box;
}
button {
  border: 0;
  padding: 0;
  color: inherit;
  font: inherit;
  font-feature-settings: inherit;
}
h1 {
  margin: 0;
  font-weight: 400;
}
b,
strong {
  font-weight: 400;
}
.yellow {
  color: #fff01a;
}
.pink {
  color: #ff00f0;
}

.status {
  height: 120px;
  padding: 0 20px 0 51px;
  display: flex;
  justify-content: space-between;
}
.clock {
  line-height: 120px;
  font-size: 38px;
  letter-spacing: -1.4px;
}
.status-icons {
  width: 370px;
  height: 50px;
  margin-top: 30px;
}
.fill-white {
  fill: #fff;
}
.dark {
  fill: #1c1c1c;
}
.wifi {
  fill: none;
  stroke: #fff;
  stroke-width: 11;
}
.cut {
  fill: #1c1c1c;
}

.header {
  height: 111px;
  border-bottom: 2px solid #333;
  display: grid;
  grid-template-columns: 300px 1fr 300px;
}
.head-side {
  display: flex;
  align-items: center;
  padding: 0 0 23px 25px;
}
.head-side.right {
  justify-content: flex-end;
  padding: 0 35px 23px 0;
}
.back {
  width: 40px;
  height: 60px;
  margin-right: 19px;
}
.back path,
.share path,
.search {
  fill: none;
  stroke: #bdbdbd;
  stroke-width: 5;
}
.back path {
  stroke-width: 6;
  stroke-linecap: round;
}
.logo {
  width: 72px;
  height: 73px;
}
.share {
  width: 58px;
  height: 58px;
  margin-right: 65px;
}
.share path {
  stroke-width: 4.5;
}
.search {
  width: 64px;
  height: 64px;
  margin-top: 2px;
  stroke-linecap: round;
}
.head-title {
  text-align: center;
}
.head-title h1 {
  margin-top: -8px;
  font-size: 47.5px;
  line-height: 56px;
}
.head-title span {
  display: block;
  padding-right: 7px;
  font-size: 38px;
  line-height: 60px;
  letter-spacing: -1.8px;
  color: #8a8a8e;
}

.quote {
  height: 247px;
  border-bottom: 2px solid #333;
  padding: 0 24px 0 24px;
  display: grid;
  grid-template-columns: repeat(4, 237px);
  grid-template-rows: 165px 60px;
  column-gap: 27px;
}
.price {
  margin-top: 23px;
  height: 92px;
  line-height: 92px;
  font-size: 67px;
  font-weight: 550;
  letter-spacing: -4.4px;
  color: #e6e6e6;
}
.change {
  display: flex;
  justify-content: space-between;
  line-height: 50px;
  font-size: 43px;
  letter-spacing: -1.1px;
  color: #e6e6e6;
}
.quote-col {
  padding-top: 10px;
}
.quote-col div {
  height: 73px;
  display: flex;
  align-items: center;
  justify-content: space-between;
  font-size: 42px;
  color: #8a8a8e;
}
.quote-col b {
  display: flex;
  gap: 9px;
  margin-right: 1px;
}
.quote-col i {
  width: 15px;
  height: 4px;
  background: #f2f2f2;
}
.count {
  display: flex;
  align-items: center;
  justify-content: space-between;
  font-size: 36px;
  color: #8a8a8e;
}
.count b {
  font-size: 43px;
  letter-spacing: -0.6px;
  color: #fff;
}
.rise b {
  color: #e60a0a;
}
.fall b {
  color: #0ad20a;
}
.more {
  display: flex;
  align-items: center;
  justify-content: flex-end;
  margin-right: -4px;
}
.more button {
  width: 124px;
  height: 55px;
  border-radius: 7px;
  background: #333;
  color: #e6e6e6;
  font-size: 35px;
  line-height: 50px;
}

.period {
  height: 104px;
  border-bottom: 2px solid #333;
  display: flex;
  align-items: center;
  color: #8a8a8e;
}
.period span {
  width: 160.5px;
  height: 102px;
  padding: 3px 2px 0 0;
  box-sizing: border-box;
  display: flex;
  align-items: center;
  justify-content: center;
  font-size: 43.5px;
  position: relative;
}
.period .active {
  color: #3476c3;
}
.period .active::after {
  content: "";
  position: absolute;
  left: 49px;
  bottom: 10px;
  width: 60px;
  height: 9px;
  border-radius: 5px;
  background: #3476c3;
}
.period em {
  margin-left: 10px;
  margin-right: -24px;
  border: 7.5px solid transparent;
  border-top: 12px solid #8a8a8e;
  border-bottom: 0;
}
.gear {
  width: 48px;
  height: 48px;
  margin-left: 34px;
  fill: none;
  stroke: #8a8a8e;
  stroke-width: 3.5;
  stroke-linejoin: round;
}

.averages {
  height: 148px;
  padding: 4px 16px 0 27px;
  background: #0d0d0d;
  display: flex;
  font-size: 37.5px;
}
.avg-name {
  width: 75px;
  font-size: 35px;
  line-height: 147px;
}
.avg-list {
  display: grid;
  grid-template-columns: 270px 273.5px 275.5px;
  grid-auto-rows: 49px;
  line-height: 49px;
  text-align: right;
  letter-spacing: -0.9px;
}
.avg-list span:first-child {
  letter-spacing: -1.5px;
}
.averages button {
  width: 99px;
  height: 47px;
  margin: 49px 0 0 auto;
  border-radius: 8px;
  background: #333;
  font-size: 35px;
  line-height: 46px;
  letter-spacing: -1px;
}

.stage {
  position: relative;
  height: 532px;
}
.plot {
  display: block;
  width: 1080px;
  overflow: visible;
  background: #0d0d0d;
}
.price-plot {
  height: 532px;
}
.sub-plot {
  height: 224px;
}
.frame {
  fill: none;
  stroke: #262626;
  stroke-width: 5;
}
.grid-line {
  fill: none;
  stroke: #222;
  stroke-width: 4;
  stroke-dasharray: 6 3;
}
.axis {
  fill: #858585;
}
.mark {
  fill: #fff;
}
.line {
  fill: none;
  stroke: currentColor;
  stroke-width: 7.2;
}
.line.thin {
  stroke-width: 5;
}
.line.blue {
  color: #3884e0;
}
.line.white {
  color: #fff;
}
.tools {
  position: absolute;
  left: 42px;
  top: 450px;
  display: flex;
  gap: 108px;
}
.tools button {
  width: 69px;
  height: 69px;
  border-radius: 50%;
  background: rgba(40, 100, 175, 0.35);
}
.tools button.off {
  background: rgba(110, 110, 110, 0.32);
}
.tools svg {
  display: block;
  width: 69px;
  height: 69px;
  fill: none;
  stroke: #3476c3;
  stroke-width: 8;
}
.tools .off svg {
  stroke: #929296;
}

.indicator {
  background: #0d0d0d;
  padding-left: 16px;
  display: flex;
  align-items: center;
  font-size: 40px;
  letter-spacing: 0.2px;
}
.vol-head {
  height: 60px;
  padding-bottom: 1px;
}
.macd-head {
  height: 59px;
}
.indicator button {
  width: 133px;
  height: 47px;
  margin-right: 1px;
  border-radius: 7px;
  background: #333;
  display: flex;
  align-items: center;
  letter-spacing: 0;
}
.indicator button span {
  width: 97px;
  padding-left: 10px;
  box-sizing: border-box;
  text-align: left;
  transform-origin: 10px 50%;
}
.vol-name {
  font-size: 33px;
  transform: scaleX(0.89);
}
.macd-name {
  font-size: 37px;
  transform: scaleX(0.8);
}
.indicator em {
  margin-left: 11px;
  border: 7.5px solid transparent;
  border-top: 12px solid #929296;
  border-bottom: 0;
}
.indicator b {
  margin-right: 11px;
}
.macd-head b {
  letter-spacing: 0.9px;
}
.macd-head .dif {
  letter-spacing: -0.1px;
}

.dates {
  height: 62px;
  padding: 0 16px 0 15px;
  background: #0d0d0d;
  display: flex;
  justify-content: space-between;
  font-size: 40px;
  line-height: 62px;
  letter-spacing: -1.3px;
  color: #858585;
}
.dates span:first-child {
  letter-spacing: 0.6px;
}

.banner-wrap {
  height: 126px;
  padding: 18px;
  background: #0d0d0d;
}
.banner {
  height: 90px;
  box-sizing: border-box;
  border-radius: 45px;
  background: #131a23;
  display: flex;
  align-items: center;
  padding-left: 30px;
  color: #3476c3;
  font-size: 38.8px;
}
.horn {
  width: 45px;
  height: 40px;
  margin-right: 37px;
  fill: #3476c3;
}
.banner span {
  width: 844px;
  margin-top: -2px;
}
.banner i {
  width: 2px;
  height: 36px;
  background: #3476c3;
}
.close {
  width: 33px;
  height: 33px;
  margin-left: 15px;
  stroke: #3476c3;
  stroke-width: 3.5;
}

.sections {
  height: 104px;
  border-top: 2px solid #333;
  border-bottom: 2px solid #333;
  padding-left: 39px;
  display: flex;
  gap: 41.7px;
  font-size: 44px;
  line-height: 102px;
  color: #8a8a8e;
}
.sections .active {
  position: relative;
  color: #3476c3;
}
.sections .active::after {
  content: "";
  position: absolute;
  left: 15px;
  bottom: 7px;
  width: 60px;
  height: 9px;
  border-radius: 5px;
  background: #3476c3;
}
.strip {
  height: 17px;
  background: #171717;
}

.bottom {
  height: 136px;
  border-top: 2px solid #333;
  box-sizing: border-box;
  display: grid;
  grid-template-columns: 270px repeat(4, 202.5px);
}
.index {
  border-right: 1px solid #333;
  display: flex;
  flex-direction: column;
  align-items: center;
  color: #6e6e6e;
}
.index em {
  margin-top: 8px;
  border: 11px solid transparent;
  border-bottom: 8px solid #77777b;
  border-top: 0;
}
.index strong {
  font-size: 41px;
  line-height: 50px;
  margin-top: 11px;
  letter-spacing: -1.7px;
}
.index div {
  width: 100%;
  box-sizing: border-box;
  padding: 0 6px 0 38px;
  display: flex;
  justify-content: space-between;
  font-size: 38px;
  line-height: 50px;
  letter-spacing: -1.7px;
}
.index span {
  font-size: 36px;
  letter-spacing: 0;
  color: #a0a0a0;
}
.action {
  display: flex;
  flex-direction: column;
  align-items: center;
  font-size: 36px;
  color: #929296;
}
.action svg {
  width: 62px;
  height: 62px;
  margin-top: 7px;
  fill: none;
  stroke: currentColor;
  stroke-width: 3.2;
}
.action .solid {
  fill: currentColor;
  stroke: none;
}
.action span {
  line-height: 60px;
  margin-top: 7px;
}
.action.active {
  color: #3476c3;
}

.system {
  height: 126px;
  background: #fff;
  display: flex;
  justify-content: center;
  align-items: center;
  gap: 180px;
}
.system svg {
  width: 60px;
  height: 50px;
  margin-top: -5px;
  fill: none;
  stroke: #888;
  stroke-width: 6;
  stroke-linecap: round;
  stroke-linejoin: round;
}
</style>
